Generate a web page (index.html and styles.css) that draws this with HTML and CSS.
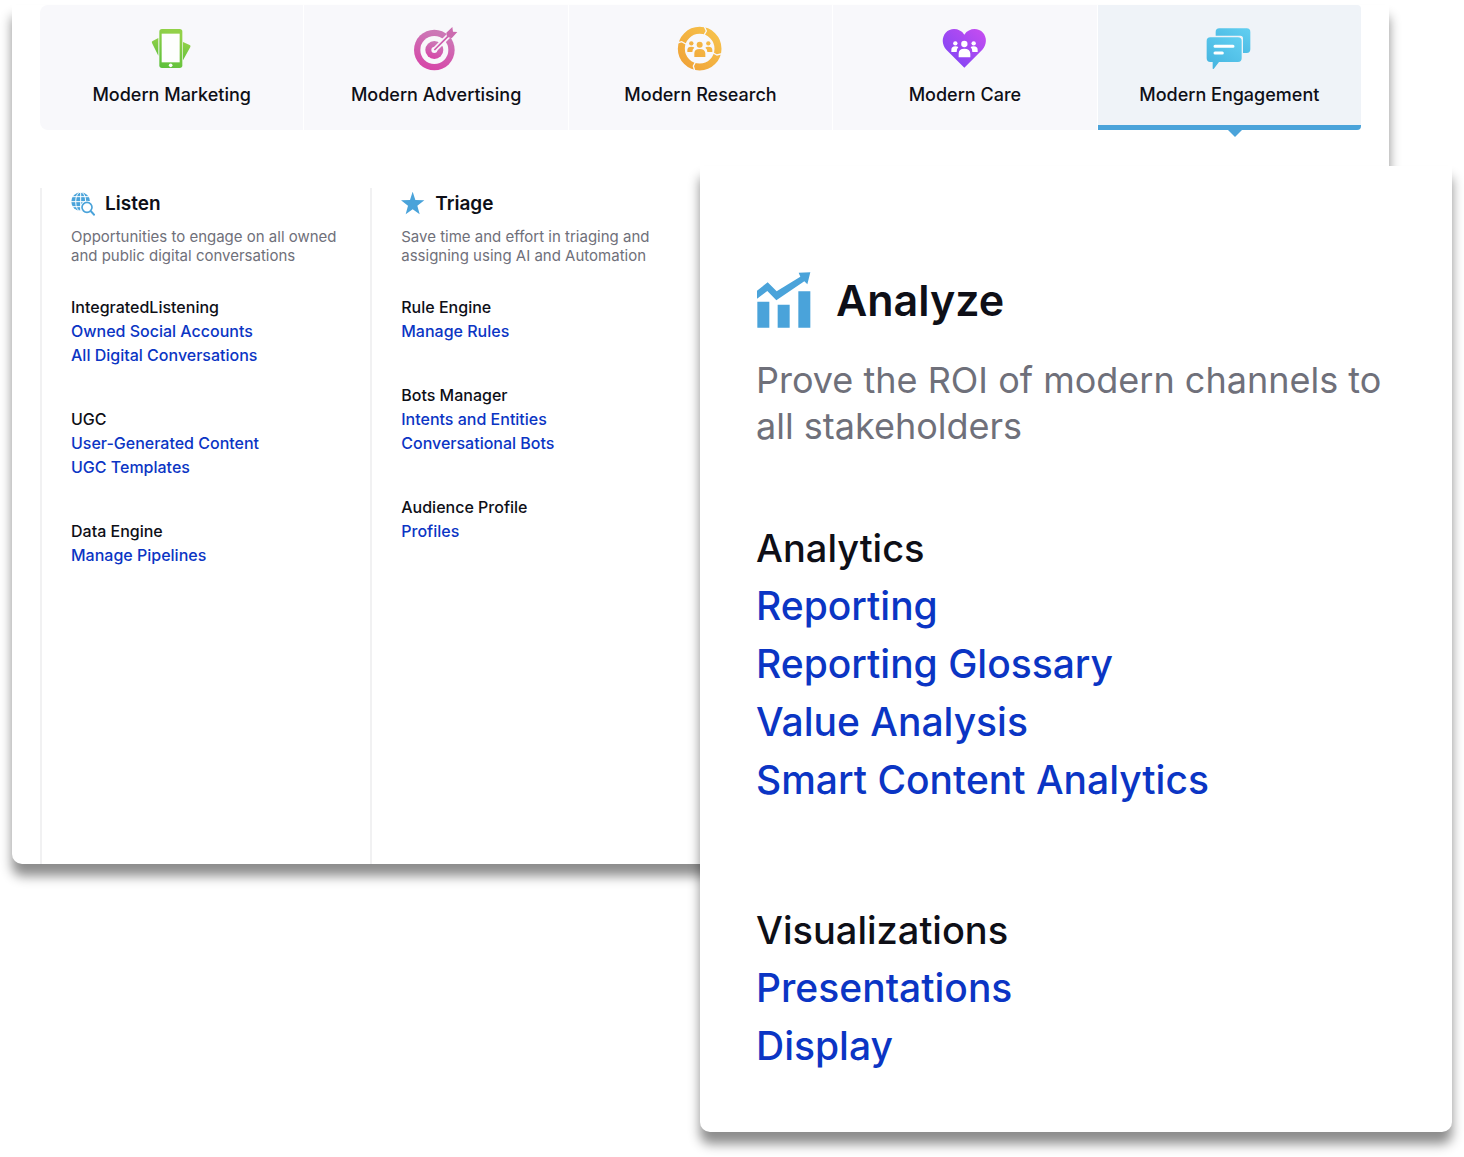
FILE: index.html
```html
<!DOCTYPE html>
<html lang="en">
<head>
<meta charset="utf-8">
<meta name="viewport" content="width=device-width, initial-scale=1">
<title>Modern Engagement</title>
<link rel="stylesheet" href="styles.css">
</head>
<body>
<main class="stage">
  <section class="panel">
    <nav class="tabs" aria-label="Products">
      <button class="tab" type="button">
        <svg class="tab-icon" viewBox="53 45 144 144" aria-hidden="true">
          <defs><linearGradient id="green" x1="0" y1="1" x2="0.3" y2="0"><stop offset="0" stop-color="#5abf3a"/><stop offset="1" stop-color="#92d148"/></linearGradient></defs>
          <path d="M84 84v53L65 99q-2-4 2-6zM158 96l20 9q4 2 2 6l-22 40z" fill="url(#green)"/>
          <rect x="87" y="57" width="69" height="117" rx="8" fill="url(#green)"/>
          <path d="M94 71h54v86H94z" fill="#fdfefd"/><circle cx="121" cy="166" r="5.500" fill="#fff"/>
        </svg>
        <span>Modern Marketing</span>
      </button>
      <button class="tab" type="button">
        <svg class="tab-icon" viewBox="51 45 144 144" aria-hidden="true">
          <defs><linearGradient id="pink" x1="0" y1="1" x2="0.3" y2="0"><stop offset="0" stop-color="#d83fa6"/><stop offset="1" stop-color="#cc78b6"/></linearGradient></defs>
          <circle cx="118" cy="120" r="61" fill="url(#pink)"/><circle cx="118" cy="120" r="42" fill="#f8f8fb"/>
          <circle cx="118" cy="120" r="27" fill="url(#pink)"/><circle cx="118" cy="120" r="9" fill="#f8f8fb"/>
          <path d="M119 119l48-48" stroke="#f8f8fb" stroke-width="15"/>
          <path d="M118 120l44-44" stroke="#cf5bad" stroke-width="5"/>
          <path d="M156 80l-2-12 18-17 2 14 13 1-17 19z" fill="#cb6baf"/>
        </svg>
        <span>Modern Advertising</span>
      </button>
      <button class="tab" type="button">
        <svg class="tab-icon" viewBox="49 45 144 144" aria-hidden="true">
          <defs><linearGradient id="gold" gradientUnits="userSpaceOnUse" x1="70" y1="170" x2="160" y2="65"><stop offset="0" stop-color="#f0a338"/><stop offset="1" stop-color="#f6c04a"/></linearGradient></defs>
          <circle cx="120" cy="116" r="55" fill="none" stroke="url(#gold)" stroke-width="21"/>
          <path d="M133 47l7 16-9 16M187 131l-15 4-17-9M106 185l-5-17 9-17M52 99l14-4 18 10" fill="none" stroke="#f8f8fb" stroke-width="4"/>
          <g fill="url(#gold)"><circle cx="95" cy="100" r="6.500"/><circle cx="146" cy="100" r="6.500"/><circle cx="120" cy="104" r="9"/>
          <path d="M83 126v-6q0-10 12-10 7 0 9 3-6 4-6 13zM158 126v-6q0-10-12-10-7 0-9 3 6 4 6 13zM104 141v-11q0-13 16-13t17 13v11z"/></g>
        </svg>
        <span>Modern Research</span>
      </button>
      <button class="tab" type="button">
        <svg class="tab-icon" viewBox="48 45 144 144" aria-hidden="true">
          <defs><linearGradient id="violet" x1="0" y1="1" x2="1" y2="0"><stop offset="0.250" stop-color="#8b46f4"/><stop offset="1" stop-color="#c94df0"/></linearGradient></defs>
          <path d="M118 173L64 119C50 103 50 82 62 68c15-16 43-14 56 6 13-20 41-22 56-6 12 14 12 35-2 51z" fill="url(#violet)"/>
          <g fill="#fff"><circle cx="91" cy="100" r="6.500"/><circle cx="146" cy="100" r="6.500"/><circle cx="118" cy="102" r="9.500"/>
          <path d="M79 126v-6q0-11 12-11 7 0 9 3-5 4-5 14zM158 126v-6q0-11-12-11-7 0-9 3 5 4 5 14zM101 142v-11q0-15 17-15t18 15v11z"/></g>
        </svg>
        <span>Modern Care</span>
      </button>
      <button class="tab tab-active" type="button" aria-current="page">
        <svg class="tab-icon" viewBox="46 45 144 144" aria-hidden="true">
          <defs><linearGradient id="sky" x1="0" y1="1" x2="0.8" y2="0"><stop offset="0" stop-color="#43b2de"/><stop offset="1" stop-color="#60cdf0"/></linearGradient></defs>
          <path d="M89 55h82q11 0 11 11v52q0 11-11 11h-11V85q0-8-8-8H78V66q0-11 11-11z" fill="url(#sky)"/>
          <path d="M62 82h83q11 0 11 11v52q0 11-11 11H88l-16 21-3-1v-20h-7q-11 0-11-11V93q0-11 11-11z" fill="url(#sky)"/>
          <path d="M76 109h54M76 129h22" stroke="#fff" stroke-width="9" stroke-linecap="round"/>
        </svg>
        <span>Modern Engagement</span>
      </button>
    </nav>
    <div class="columns">
      <section class="column">
        <h2 class="heading">
          <svg class="heading-icon" viewBox="0 0 72 72" aria-hidden="true">
            <circle cx="29" cy="29" r="28" fill="#4aa3da"/>
            <path d="M29 0v58M0 29h58M5 14h48M5 44h48" fill="none" stroke="#fff" stroke-width="3"/>
            <ellipse cx="29" cy="29" rx="15" ry="29" fill="none" stroke="#fff" stroke-width="3"/>
            <circle cx="48" cy="46" r="20" fill="#fff"/>
            <circle cx="48" cy="46" r="15" fill="#fff" stroke="#4aa3da" stroke-width="5"/>
            <path d="M59 57l12 13" stroke="#4aa3da" stroke-width="6"/>
          </svg>
          Listen
        </h2>
        <p class="summary">Opportunities to engage on all owned and public digital conversations</p>
        <div class="groups">
          <div class="group"><h3>IntegratedListening</h3><a href="#">Owned Social Accounts</a><a href="#">All Digital Conversations</a></div>
          <div class="group"><h3>UGC</h3><a href="#">User-Generated Content</a><a href="#">UGC Templates</a></div>
          <div class="group"><h3>Data Engine</h3><a href="#">Manage Pipelines</a></div>
        </div>
      </section>
      <section class="column">
        <h2 class="heading">
          <svg class="heading-icon" viewBox="0 2 72 72" aria-hidden="true"><path d="M35 1l8 25 27 1-21 16 7 26-21-15-21 15 7-26L0 27l27-1z" fill="#4aa3da"/></svg>
          Triage
        </h2>
        <p class="summary">Save time and effort in triaging and assigning using AI and Automation</p>
        <div class="groups">
          <div class="group"><h3>Rule Engine</h3><a href="#">Manage Rules</a></div>
          <div class="group"><h3>Bots Manager</h3><a href="#">Intents and Entities</a><a href="#">Conversational Bots</a></div>
          <div class="group"><h3>Audience Profile</h3><a href="#">Profiles</a></div>
        </div>
      </section>
    </div>
  </section>
  <section class="card">
    <h2 class="heading">
      <svg class="heading-icon" viewBox="50 64 168 168" aria-hidden="true">
        <path d="M54 153h36v78H54zM115 162h36v69h-36zM177 122h36v109h-36zM53 120l32-25 27 27 71-44-5-12 35-1-9 36-9-9-84 57-27-28-31 23z" fill="#4aa3da"/>
      </svg>
      Analyze
    </h2>
    <p class="summary">Prove the ROI of modern channels to all stakeholders</p>
    <div class="groups">
      <div class="group"><h3>Analytics</h3><a href="#">Reporting</a><a href="#">Reporting Glossary</a><a href="#">Value Analysis</a><a href="#">Smart Content Analytics</a></div>
      <div class="group"><h3>Visualizations</h3><a href="#">Presentations</a><a href="#">Display</a></div>
    </div>
  </section>
</main>
</body>
</html>
```
FILE: styles.css
```css
* { box-sizing: border-box; }

body {
  margin: 0;
  background: #fff;
  color: #0e0f17;
  font-family: Inter, "Liberation Sans", sans-serif;
}

h2, h3, p { margin: 0; }

/* The card shares the middle row with the panel and overlaps it */
.stage {
  display: grid;
  grid-template-columns: 688fr 752fr;
  grid-template-rows: 166px minmax(698px, auto) auto;
  padding: 0 12px 24px;
}

.panel {
  grid-column: 1 / 3;
  grid-row: 1 / 3;
  display: flex;
  flex-direction: column;
  margin: 5px 63px 0 0;
  padding: 0 28px;
  background: #fff;
  border-radius: 0 0 10px 10px;
  box-shadow: 0 12px 12px rgba(0, 0, 0, 0.45);
}

.tabs {
  display: grid;
  grid-template-columns: repeat(5, 1fr);
  gap: 1px;
}

.tab {
  position: relative;
  display: flex;
  flex-direction: column;
  align-items: center;
  gap: 10px;
  height: 125px;
  padding: 20px 0 0;
  border: 0;
  background: #f8f8fb;
  color: inherit;
  font: 500 18px/24px Inter, "Liberation Sans", sans-serif;
}

.tab:first-child { border-radius: 8px 0 0 8px; }

.tab-icon { width: 48px; height: 48px; }

.tab-active {
  background: #eff3f8;
  border-bottom: 5px solid #4aa3da;
  border-radius: 0 4px 4px 0;
}

.tab-active::after {
  content: "";
  position: absolute;
  top: 100%;
  left: 49%;
  margin-top: 4px;
  border: 8px solid transparent;
  border-top-color: #4aa3da;
  border-bottom: 0;
}

.columns {
  display: grid;
  grid-template-columns: repeat(4, 1fr);
  flex: 1;
  margin-top: 58px;
}

.column {
  padding: 0 28px 0 29px;
  border-left: 2px solid #f1f1f2;
}

.heading {
  display: flex;
  align-items: center;
  gap: 10px;
  font-size: 19px;
  font-weight: 600;
  line-height: 31px;
}

.heading-icon { width: 24px; height: 24px; }

.summary {
  margin-top: 8px;
  color: #6f707a;
  font-size: 15px;
  line-height: 19px;
}

.groups {
  display: flex;
  flex-direction: column;
  gap: 40px;
  margin-top: 30px;
}

.group {
  display: flex;
  flex-direction: column;
  align-items: flex-start;
  font-size: 16px;
  font-weight: 500;
  line-height: 24px;
}

.group h3 { font: inherit; }

.group a {
  color: #0b35c4;
  text-decoration: none;
}

.card {
  z-index: 1;
  grid-column: 2;
  grid-row: 2 / 4;
  padding: 104px 56px 57px;
  background: #fff;
  border-radius: 0 0 10px 10px;
  box-shadow: 0 12px 12px rgba(0, 0, 0, 0.45);
}

.card .heading {
  gap: 24px;
  font-size: 43px;
  line-height: 60px;
}

.card .heading-icon { width: 56px; height: 56px; }

.card .summary {
  margin-top: 27px;
  font-size: 36px;
  line-height: 46px;
}

.card .groups {
  gap: 92px;
  margin-top: 70px;
}

.card .group {
  font-size: 39px;
  line-height: 58px;
}

.card .group h3 { font-size: 38px; }
```
